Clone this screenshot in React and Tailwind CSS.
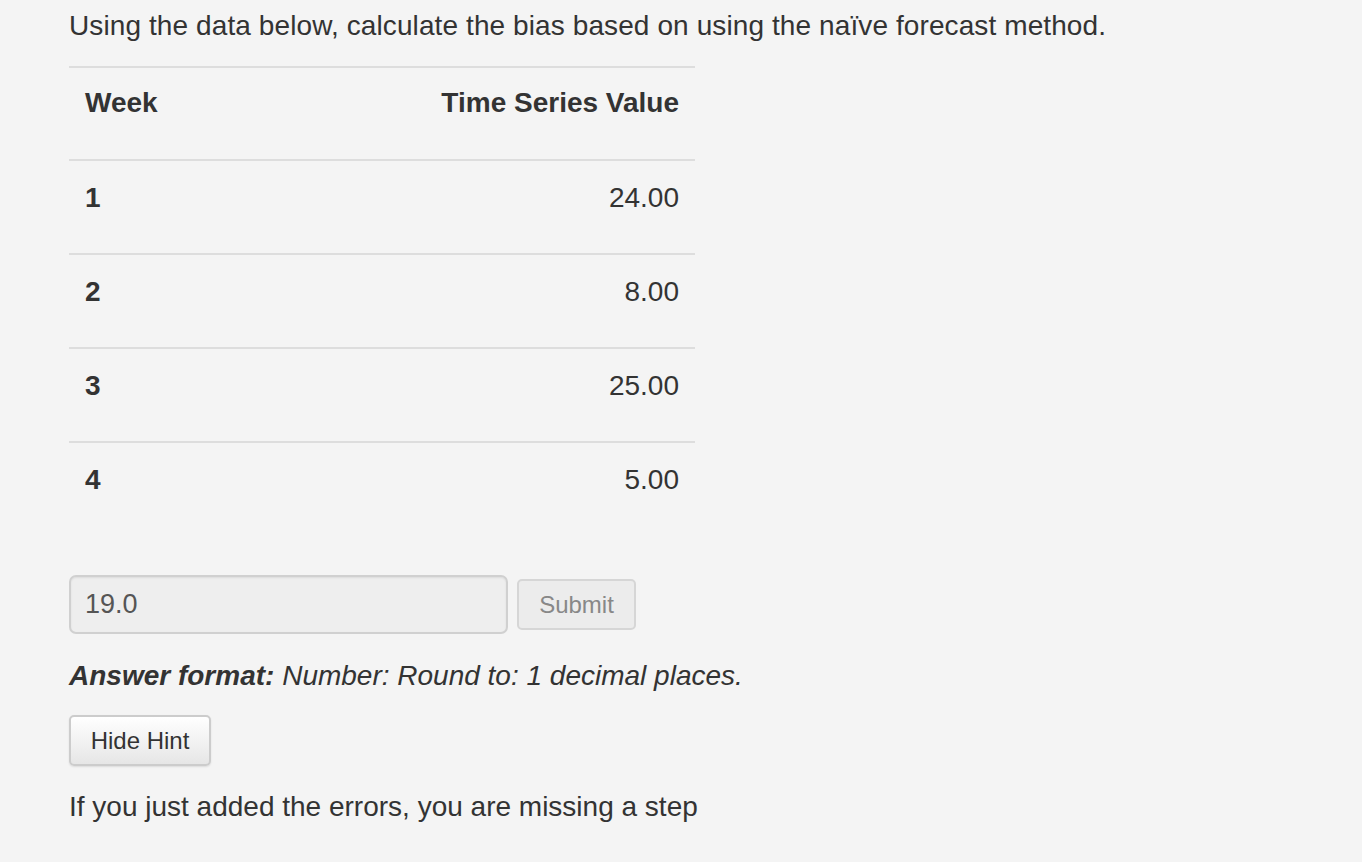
import React from 'react';

const rows = [
  { week: 1, value: '24.00' },
  { week: 2, value: '8.00' },
  { week: 3, value: '25.00' },
  { week: 4, value: '5.00' },
];

const App = () => {
  return (
    <div className="min-h-[862px] bg-[#f4f4f4] text-[#333] text-[28px] leading-[40px] font-['Liberation_Sans',Arial,sans-serif]">
      <div className="pl-[69px] pt-[6px]">
        <p className="tracking-[0.1px]">Using the data below, calculate the bias based on using the naïve forecast method.</p>

        <div className="w-[626px] mt-[20px] border-t-2 border-[#ddd]">
          <div className="flex justify-between h-[93px] pt-[15px] px-[16px] font-bold border-b-2 border-[#ddd]">
            <span>Week</span>
            <span>Time Series Value</span>
          </div>
          {rows.map((row, i) => (
            <div
              key={row.week}
              className={`flex justify-between h-[94px] pt-[17px] px-[16px] ${i < rows.length - 1 ? 'border-b-2 border-[#ddd]' : ''}`}
            >
              <span className="font-bold">{row.week}</span>
              <span>{row.value}</span>
            </div>
          ))}
        </div>

        <div className="flex items-center gap-[9px] mt-[38px]">
          <input
            type="text"
            defaultValue="19.0"
            disabled
            className="w-[439px] h-[59px] px-[14px] rounded-[7px] border-2 border-[#d0d0d0] bg-[#eeeeee] text-[#555] text-[27px] shadow-[inset_0_1px_2px_rgba(0,0,0,0.08)]"
          />
          <button
            disabled
            className="w-[119px] h-[51px] rounded-[5px] border-2 border-[#d6d6d6] bg-[#ececec] text-[#888] text-[24px]"
          >
            Submit
          </button>
        </div>

        <p className="mt-[22px] italic">
          <span className="font-bold">Answer format:</span> Number: Round to: 1 decimal places.
        </p>

        <button className="mt-[19px] w-[142px] h-[51px] rounded-[5px] border-2 border-[#ccc] bg-gradient-to-b from-white to-[#e6e6e6] text-[#333] text-[24px] shadow-[0_1px_2px_rgba(0,0,0,0.1)]">
          Hide Hint
        </button>

        <p className="mt-[21px]">If you just added the errors, you are missing a step</p>
      </div>
    </div>
  );
};

export default App;
